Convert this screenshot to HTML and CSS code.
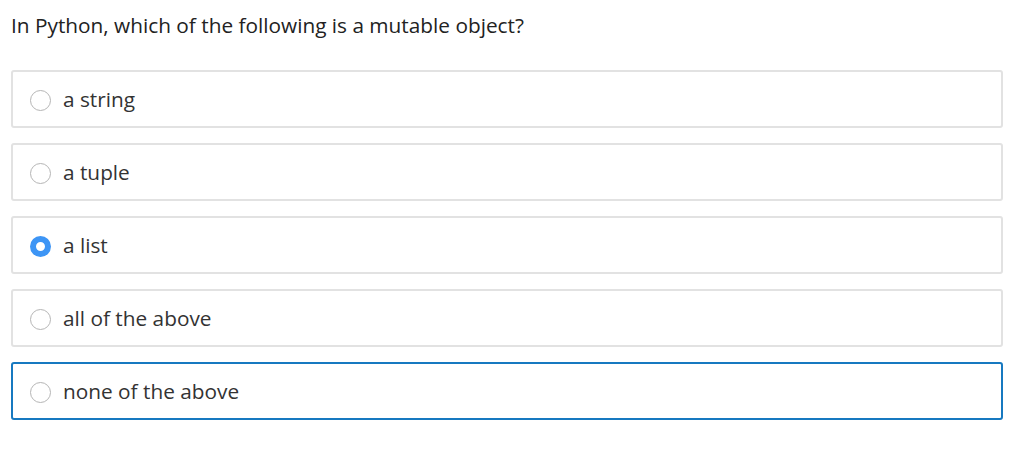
FILE: index.html
```html
<!DOCTYPE html>
<html>
<head>
<meta charset="utf-8">
<link rel="stylesheet" href="styles.css">
</head>
<body>
<div class="quiz">
  <h1 class="question">In Python, which of the following is a mutable object?</h1>
  <div class="options">
    <label class="option"><span class="radio"></span><span class="label">a string</span></label>
    <label class="option"><span class="radio"></span><span class="label">a tuple</span></label>
    <label class="option"><span class="radio checked"></span><span class="label">a list</span></label>
    <label class="option"><span class="radio"></span><span class="label">all of the above</span></label>
    <label class="option focused"><span class="radio"></span><span class="label">none of the above</span></label>
  </div>
</div>
</body>
</html>
```
FILE: styles.css
```css
html, body {
  margin: 0;
  padding: 0;
  background: #fff;
}
body {
  font-family: "Open Sans", "Noto Sans", sans-serif;
  color: #333;
}
.quiz {
  padding: 11px 21px 0 11px;
}
.question {
  margin: 0;
  font-size: 20.8px;
  font-weight: 400;
  line-height: 28px;
  color: #222;
}
.options {
  display: flex;
  flex-direction: column;
  gap: 15px;
  margin-top: 31px;
}
.option {
  display: flex;
  align-items: center;
  height: 58px;
  box-sizing: border-box;
  border: 2px solid #e2e2e2;
  border-radius: 3px;
  padding-left: 17px;
  background: #fff;
}
.option.focused {
  border-color: #1779c0;
}
.radio {
  width: 21px;
  height: 21px;
  box-sizing: border-box;
  border: 1px solid #b5b5b5;
  border-radius: 50%;
  background: #fff;
  flex: none;
  margin-top: 3px;
}
.radio.checked {
  border: 6px solid #3d95f5;
  background: #fff;
}
.label {
  margin-left: 12px;
  font-size: 20.8px;
  color: #333;
}
```
